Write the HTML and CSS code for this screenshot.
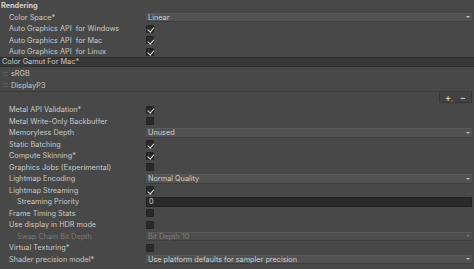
FILE: index.html
```html
<!DOCTYPE html>
<html lang="en">
<head>
    <meta charset="UTF-8">
    <title>Rendering</title>
    <link rel="stylesheet" href="styles.css">
</head>
<body>
    <div class="panel">
        <div class="row title">Rendering</div>

        <div class="row">
            <div class="label">Color Space*</div>
            <div class="value"><div class="dropdown">Linear<span class="arrow"></span></div></div>
        </div>
        <div class="row">
            <div class="label">Auto Graphics API&nbsp; for Windows</div>
            <div class="value"><span class="check on"></span></div>
        </div>
        <div class="row">
            <div class="label">Auto Graphics API&nbsp; for Mac</div>
            <div class="value"><span class="check on"></span></div>
        </div>
        <div class="row">
            <div class="label">Auto Graphics API&nbsp; for Linux</div>
            <div class="value"><span class="check on"></span></div>
        </div>

        <!-- reorderable list -->
        <div class="list">
            <div class="list-header">Color Gamut For Mac*</div>
            <div class="list-body">
                <div class="list-item"><span class="handle"></span>sRGB</div>
                <div class="list-item"><span class="handle"></span>DisplayP3</div>
            </div>
            <div class="list-footer">
                <div class="buttons"><span>+<small>,</small></span><span>−</span></div>
            </div>
        </div>

        <div class="row">
            <div class="label">Metal API Validation*</div>
            <div class="value"><span class="check on"></span></div>
        </div>
        <div class="row">
            <div class="label">Metal Write-Only Backbuffer</div>
            <div class="value"><span class="check"></span></div>
        </div>
        <div class="row">
            <div class="label">Memoryless Depth</div>
            <div class="value"><div class="dropdown">Unused<span class="arrow"></span></div></div>
        </div>
        <div class="row">
            <div class="label">Static Batching</div>
            <div class="value"><span class="check on"></span></div>
        </div>
        <div class="row">
            <div class="label">Compute Skinning*</div>
            <div class="value"><span class="check on"></span></div>
        </div>
        <div class="row">
            <div class="label">Graphics Jobs (Experimental)</div>
            <div class="value"><span class="check"></span></div>
        </div>
        <div class="row">
            <div class="label">Lightmap Encoding</div>
            <div class="value"><div class="dropdown">Normal Quality<span class="arrow"></span></div></div>
        </div>
        <div class="row">
            <div class="label">Lightmap Streaming</div>
            <div class="value"><span class="check on"></span></div>
        </div>
        <div class="row">
            <div class="label indent">Streaming Priority</div>
            <div class="value"><div class="number">0</div></div>
        </div>
        <div class="row">
            <div class="label">Frame Timing Stats</div>
            <div class="value"><span class="check"></span></div>
        </div>
        <div class="row">
            <div class="label">Use display in HDR mode</div>
            <div class="value"><span class="check"></span></div>
        </div>
        <div class="row disabled">
            <div class="label indent">Swap Chain Bit Depth</div>
            <div class="value"><div class="dropdown">Bit Depth 10<span class="arrow"></span></div></div>
        </div>
        <div class="row">
            <div class="label">Virtual Texturing*</div>
            <div class="value"><span class="check"></span></div>
        </div>
        <div class="row">
            <div class="label">Shader precision model*</div>
            <div class="value"><div class="dropdown">Use platform defaults for sampler precision<span class="arrow"></span></div></div>
        </div>
    </div>
</body>
</html>
```

FILE: styles.css
```css
body {
    margin: 0;
    background-color: #484848;
    font-family: Inter, 'Noto Sans', sans-serif;
    font-size: 7.3px;
    color: #c8c8c8;
}
.panel {
    width: 474px;
    height: 269px;
    overflow: hidden;
}
.row {
    display: flex;
    align-items: center;
    height: 11.5px;
}
.title {
    padding-left: 1px;
    font-weight: bold;
    color: #d2d2d2;
}
.label {
    width: 146px;
    flex-shrink: 0;
    padding-left: 9px;
    box-sizing: border-box;
    white-space: nowrap;
}
.label.indent {
    padding-left: 17px;
}
.value {
    flex: 1;
    padding-right: 2px;
    display: flex;
    align-items: center;
}
.check {
    width: 8px;
    height: 8px;
    box-sizing: border-box;
    background-color: #2b2b2b;
    border: 1px solid #232323;
    border-radius: 1px;
    position: relative;
}
.check.on::after {
    content: "";
    position: absolute;
    left: 1.5px;
    top: 0.5px;
    width: 2.5px;
    height: 4.5px;
    border-right: 1.3px solid #e4e4e4;
    border-bottom: 1.3px solid #e4e4e4;
    transform: rotate(40deg);
}
.dropdown {
    flex: 1;
    height: 9.5px;
    line-height: 8px;
    box-sizing: border-box;
    padding-left: 2px;
    background-color: #525252;
    border-top: 1px solid #5a5a5a;
    border-bottom: 1px solid #3e3e3e;
    border-radius: 1.5px;
    position: relative;
    color: #d0d0d0;
}
.arrow {
    position: absolute;
    right: 2px;
    top: 2.5px;
    width: 0;
    height: 0;
    border-left: 2px solid transparent;
    border-right: 2px solid transparent;
    border-top: 2.5px solid #c4c4c4;
}
.number {
    flex: 1;
    height: 9.5px;
    line-height: 7.5px;
    box-sizing: border-box;
    padding-left: 2px;
    background-color: #2a2a2a;
    border: 1px solid #222;
    color: #d2d2d2;
}
.disabled {
    color: #7a7a7a;
}
.disabled .dropdown {
    background-color: #4d4d4d;
    color: #7e7e7e;
}
.disabled .arrow {
    border-top-color: #7a7a7a;
}
.list {
    margin-top: -1px;
}
.list-header {
    height: 8.5px;
    line-height: 8.5px;
    padding-left: 2px;
    background-color: #373737;
    border-top: 1px solid #2f2f2f;
    border-bottom: 1px solid #2f2f2f;
}
.list-body {
    padding-top: 1px;
    height: 23px;
    border-bottom: 1px solid #3a3a3a;
    margin-right: 2px;
}
.list-item {
    display: flex;
    align-items: center;
    height: 11.5px;
}
.handle {
    width: 5px;
    height: 2px;
    margin-left: 3px;
    margin-right: 3px;
    border-top: 1px solid #5a5a5a;
    border-bottom: 1px solid #5a5a5a;
}
.list-footer {
    display: flex;
    justify-content: flex-end;
    padding-right: 2px;
    height: 12px;
}
.buttons {
    width: 33px;
    height: 11px;
    box-sizing: border-box;
    background-color: #424242;
    border: 1px solid #353535;
    border-top: none;
    display: flex;
    align-items: center;
    justify-content: center;
    gap: 7px;
    font-size: 9px;
    font-weight: bold;
    color: #c8c8c8;
}
.buttons small {
    font-size: 5px;
}
```
